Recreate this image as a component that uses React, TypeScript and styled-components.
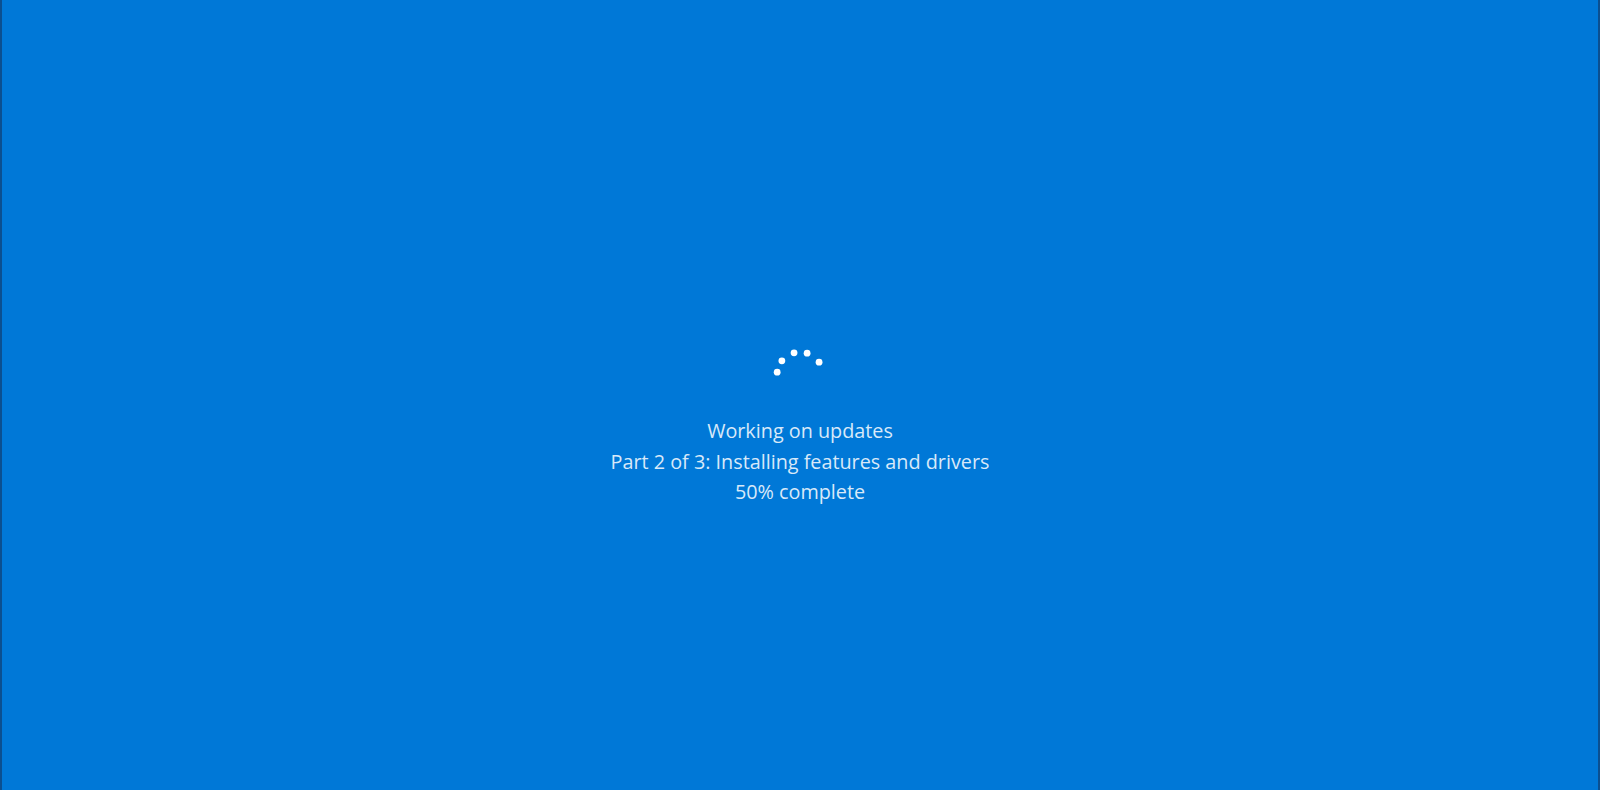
import React from "react";
import styled, { createGlobalStyle } from "styled-components";

const GlobalStyle = createGlobalStyle`
  html, body {
    margin: 0;
    padding: 0;
    background: #0078d7;
  }
  * { box-sizing: border-box; }
`;

const Screen = styled.main`
  width: 100%;
  height: 790px;
  background: #0078d7;
  border-left: 2px solid #0b4f8f;
  border-right: 2px solid #0b4f8f;
  display: flex;
  flex-direction: column;
  align-items: center;
  padding-top: 345px;
  font-family: "Open Sans", "Noto Sans", "Liberation Sans", sans-serif;
`;

const Spinner = styled.svg`
  width: 60px;
  height: 60px;
  display: block;
  overflow: visible;
`;

const Status = styled.div`
  margin-top: 11px;
  display: flex;
  flex-direction: column;
  align-items: center;
  color: #d8e9f9;
  font-size: 19.8px;
  font-weight: 400;
  line-height: 30.5px;
  text-align: center;
`;

const Line = styled.div`
  white-space: nowrap;
`;

// Dot angles (degrees, 0 = right, counter-clockwise) along the spinner ring
const dotAngles = [173, 142, 105, 72, 34];

export default function App() {
  const r = 23;
  return (
    <>
      <GlobalStyle />
      <Screen>
        <Spinner viewBox="0 0 60 60" aria-hidden="true">
          {dotAngles.map((a) => {
            const rad = (a * Math.PI) / 180;
            return (
              <circle
                key={a}
                cx={30 + r * Math.cos(rad)}
                cy={30 - r * Math.sin(rad)}
                r={3.4}
                fill="#ffffff"
              />
            );
          })}
        </Spinner>
        <Status>
          <Line>Working on updates</Line>
          <Line>Part 2 of 3: Installing features and drivers</Line>
          <Line>50% complete</Line>
        </Status>
      </Screen>
    </>
  );
}
